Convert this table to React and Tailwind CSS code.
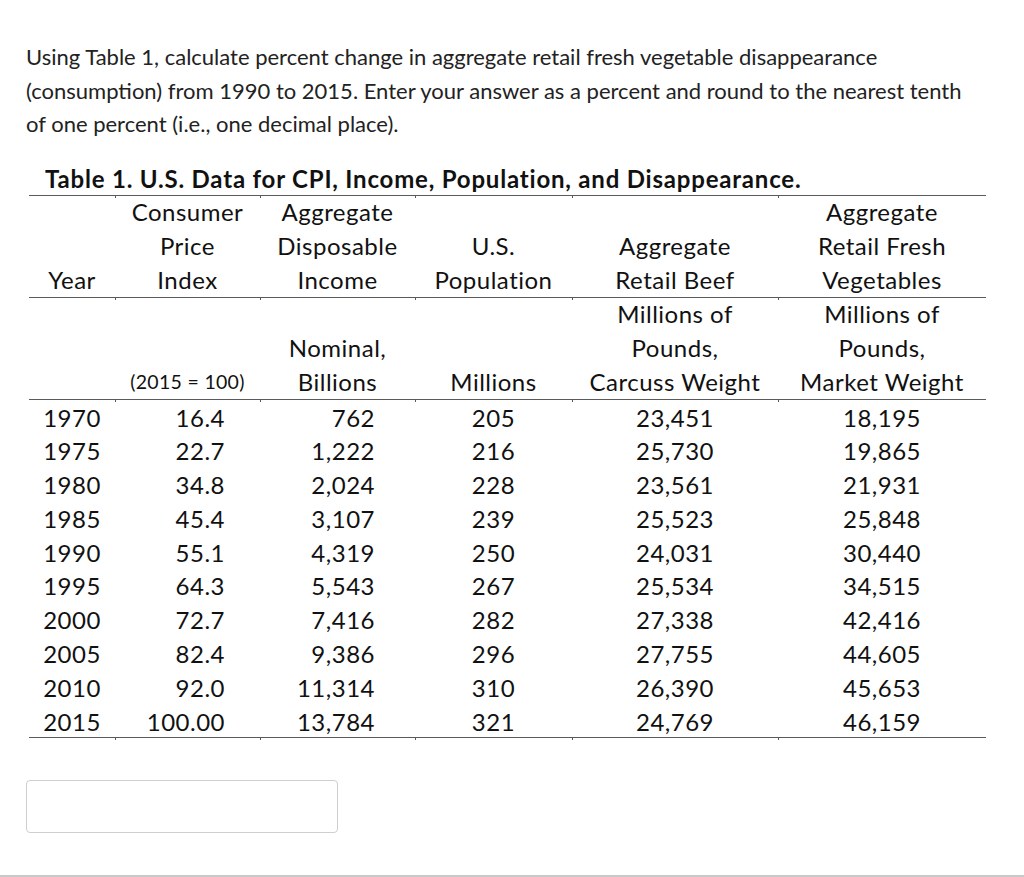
import React from "react";

const COLS = "grid grid-cols-[86px_145px_155px_157px_206px_208px]";

function Rule() {
  return (
    <div className={COLS}>
      {[0, 1, 2, 3, 4, 5].map((i) => (
        <div key={i} className="h-px bg-[#5a5a5a]">
          {i > 0 && <div className="w-px h-[3px] bg-[#5a5a5a]" />}
        </div>
      ))}
    </div>
  );
}

function HeadCell({ lines, small }) {
  return (
    <div className="flex flex-col justify-end items-center h-[101px]">
      {lines.map((l, i) => (
        <div key={i} className={"h-[33.67px] flex items-center whitespace-nowrap " + (small && i === lines.length - 1 ? "text-[19.5px] tracking-[0.3px]" : "")}>
          {l}
        </div>
      ))}
    </div>
  );
}

const data = [
  ["1970", "16.4", "762", "205", "23,451", "18,195"],
  ["1975", "22.7", "1,222", "216", "25,730", "19,865"],
  ["1980", "34.8", "2,024", "228", "23,561", "21,931"],
  ["1985", "45.4", "3,107", "239", "25,523", "25,848"],
  ["1990", "55.1", "4,319", "250", "24,031", "30,440"],
  ["1995", "64.3", "5,543", "267", "25,534", "34,515"],
  ["2000", "72.7", "7,416", "282", "27,338", "42,416"],
  ["2005", "82.4", "9,386", "296", "27,755", "44,605"],
  ["2010", "92.0", "11,314", "310", "26,390", "45,653"],
  ["2015", "100.00", "13,784", "321", "24,769", "46,159"],
];

export default function App() {
  return (
    <div className="h-[877px] flex flex-col bg-white overflow-hidden" style={{ fontFamily: "Lato, 'Open Sans', sans-serif" }}>
      <div className="px-[26px] pt-[40px] flex-1">
        <p className="text-[22px] leading-[33.5px] text-[#222] w-[960px]">
          Using Table 1, calculate percent change in aggregate retail fresh vegetable disappearance (consumption) from 1990 to 2015. Enter your answer as a percent and round to the nearest tenth of one percent (i.e., one decimal place).
        </p>
        <div className="mt-[22px] ml-[19px] h-[32px] flex items-center text-[24px] tracking-[0.8px] font-bold text-[#111] whitespace-nowrap">
          Table 1. U.S. Data for CPI, Income, Population, and Disappearance.
        </div>
        <div className="ml-[3px] w-[957px] text-[24px] tracking-[0.5px] text-[#111]">
          <Rule />
          <div className={COLS}>
            <HeadCell lines={["Year"]} />
            <HeadCell lines={["Consumer", "Price", "Index"]} />
            <HeadCell lines={["Aggregate", "Disposable", "Income"]} />
            <HeadCell lines={["U.S.", "Population"]} />
            <HeadCell lines={["Aggregate", "Retail Beef"]} />
            <HeadCell lines={["Aggregate", "Retail Fresh", "Vegetables"]} />
          </div>
          <Rule />
          <div className={COLS}>
            <HeadCell lines={[""]} />
            <HeadCell lines={["(2015 = 100)"]} small />
            <HeadCell lines={["Nominal,", "Billions"]} />
            <HeadCell lines={["Millions"]} />
            <HeadCell lines={["Millions of", "Pounds,", "Carcuss Weight"]} />
            <HeadCell lines={["Millions of", "Pounds,", "Market Weight"]} />
          </div>
          <Rule />
          <div className="flex flex-col">
            {data.map((r) => (
              <div key={r[0]} className={COLS + " h-[33.8px] items-center"}>
                <div className="text-center">{r[0]}</div>
                <div className="text-right pr-[35px]">{r[1]}</div>
                <div className="text-right pr-[40px]">{r[2]}</div>
                <div className="text-center">{r[3]}</div>
                <div className="text-center">{r[4]}</div>
                <div className="text-center">{r[5]}</div>
              </div>
            ))}
          </div>
          <Rule />
        </div>
        <input
          type="text"
          className="mt-[42px] block w-[312px] h-[53px] border border-[#cfcfcf] rounded-[4px] bg-white"
        />
      </div>
      <div className="h-[2px] bg-[#c9c9c9]" />
    </div>
  );
}
